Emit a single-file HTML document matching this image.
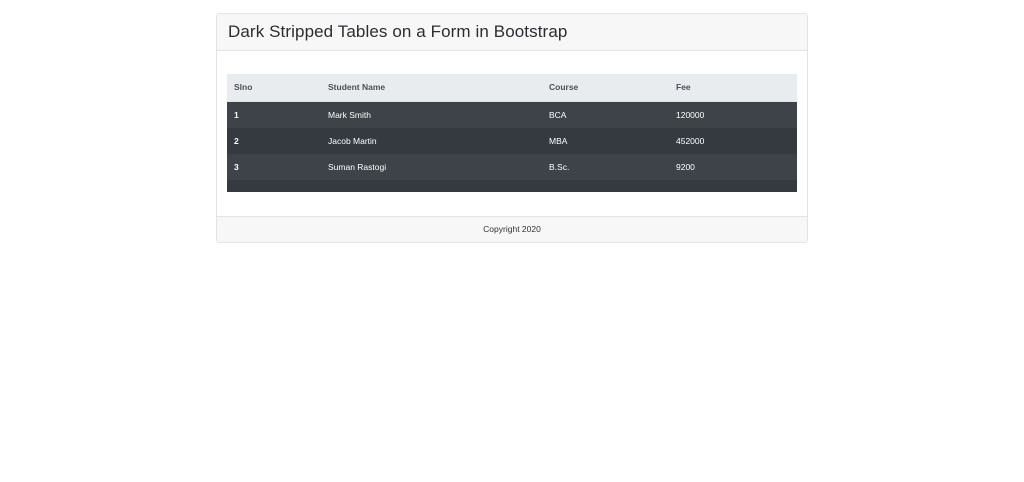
<!DOCTYPE html>
<html><head><style>
body{margin:0;background:#fff;font-family:"Liberation Sans",sans-serif;color:#212529;}
.card{position:absolute;left:216px;top:13px;width:590px;height:228px;border:1px solid #e3e3e3;border-radius:3px;background:#fff;}
.hd{height:36px;border-bottom:1px solid #e3e3e3;background:#f7f7f7;}
.hd h1{margin:0;font-size:17px;font-weight:normal;line-height:36px;padding-left:11px;color:#2a2d31;letter-spacing:0.1px}
.tbl{position:absolute;left:10px;top:60px;width:570px;height:118px;background:#343a40;}
.r{position:absolute;left:0;width:570px;height:26px;font-size:8.5px;color:#fff;}
.r span{position:absolute;top:0;line-height:26px}
.h{background:#e9ecef;color:#495057;font-weight:bold;height:27px;border-bottom:1px solid #dee2e6}
.h span{line-height:27px}
.s{background:#3e4349}
.c1{left:7px}.c2{left:101px}.c3{left:322px}.c4{left:449px}
.ft{position:absolute;left:0;right:0;bottom:0;height:25px;border-top:1px solid #e3e3e3;background:#f7f7f7;text-align:center;font-size:8.5px;line-height:25px;color:#333}
</style></head><body>
<div class="card">
<div class="hd"><h1>Dark Stripped Tables on a Form in Bootstrap</h1></div>
<div class="tbl">
<div class="r h" style="top:0"><span class="c1">Slno</span><span class="c2">Student Name</span><span class="c3">Course</span><span class="c4">Fee</span></div>
<div class="r s" style="top:28px"><span class="c1"><b>1</b></span><span class="c2">Mark Smith</span><span class="c3">BCA</span><span class="c4">120000</span></div>
<div class="r" style="top:54px"><span class="c1"><b>2</b></span><span class="c2">Jacob Martin</span><span class="c3">MBA</span><span class="c4">452000</span></div>
<div class="r s" style="top:80px"><span class="c1"><b>3</b></span><span class="c2">Suman Rastogi</span><span class="c3">B.Sc.</span><span class="c4">9200</span></div>
</div>
<div class="ft">Copyright 2020</div>
</div>
</body></html>
